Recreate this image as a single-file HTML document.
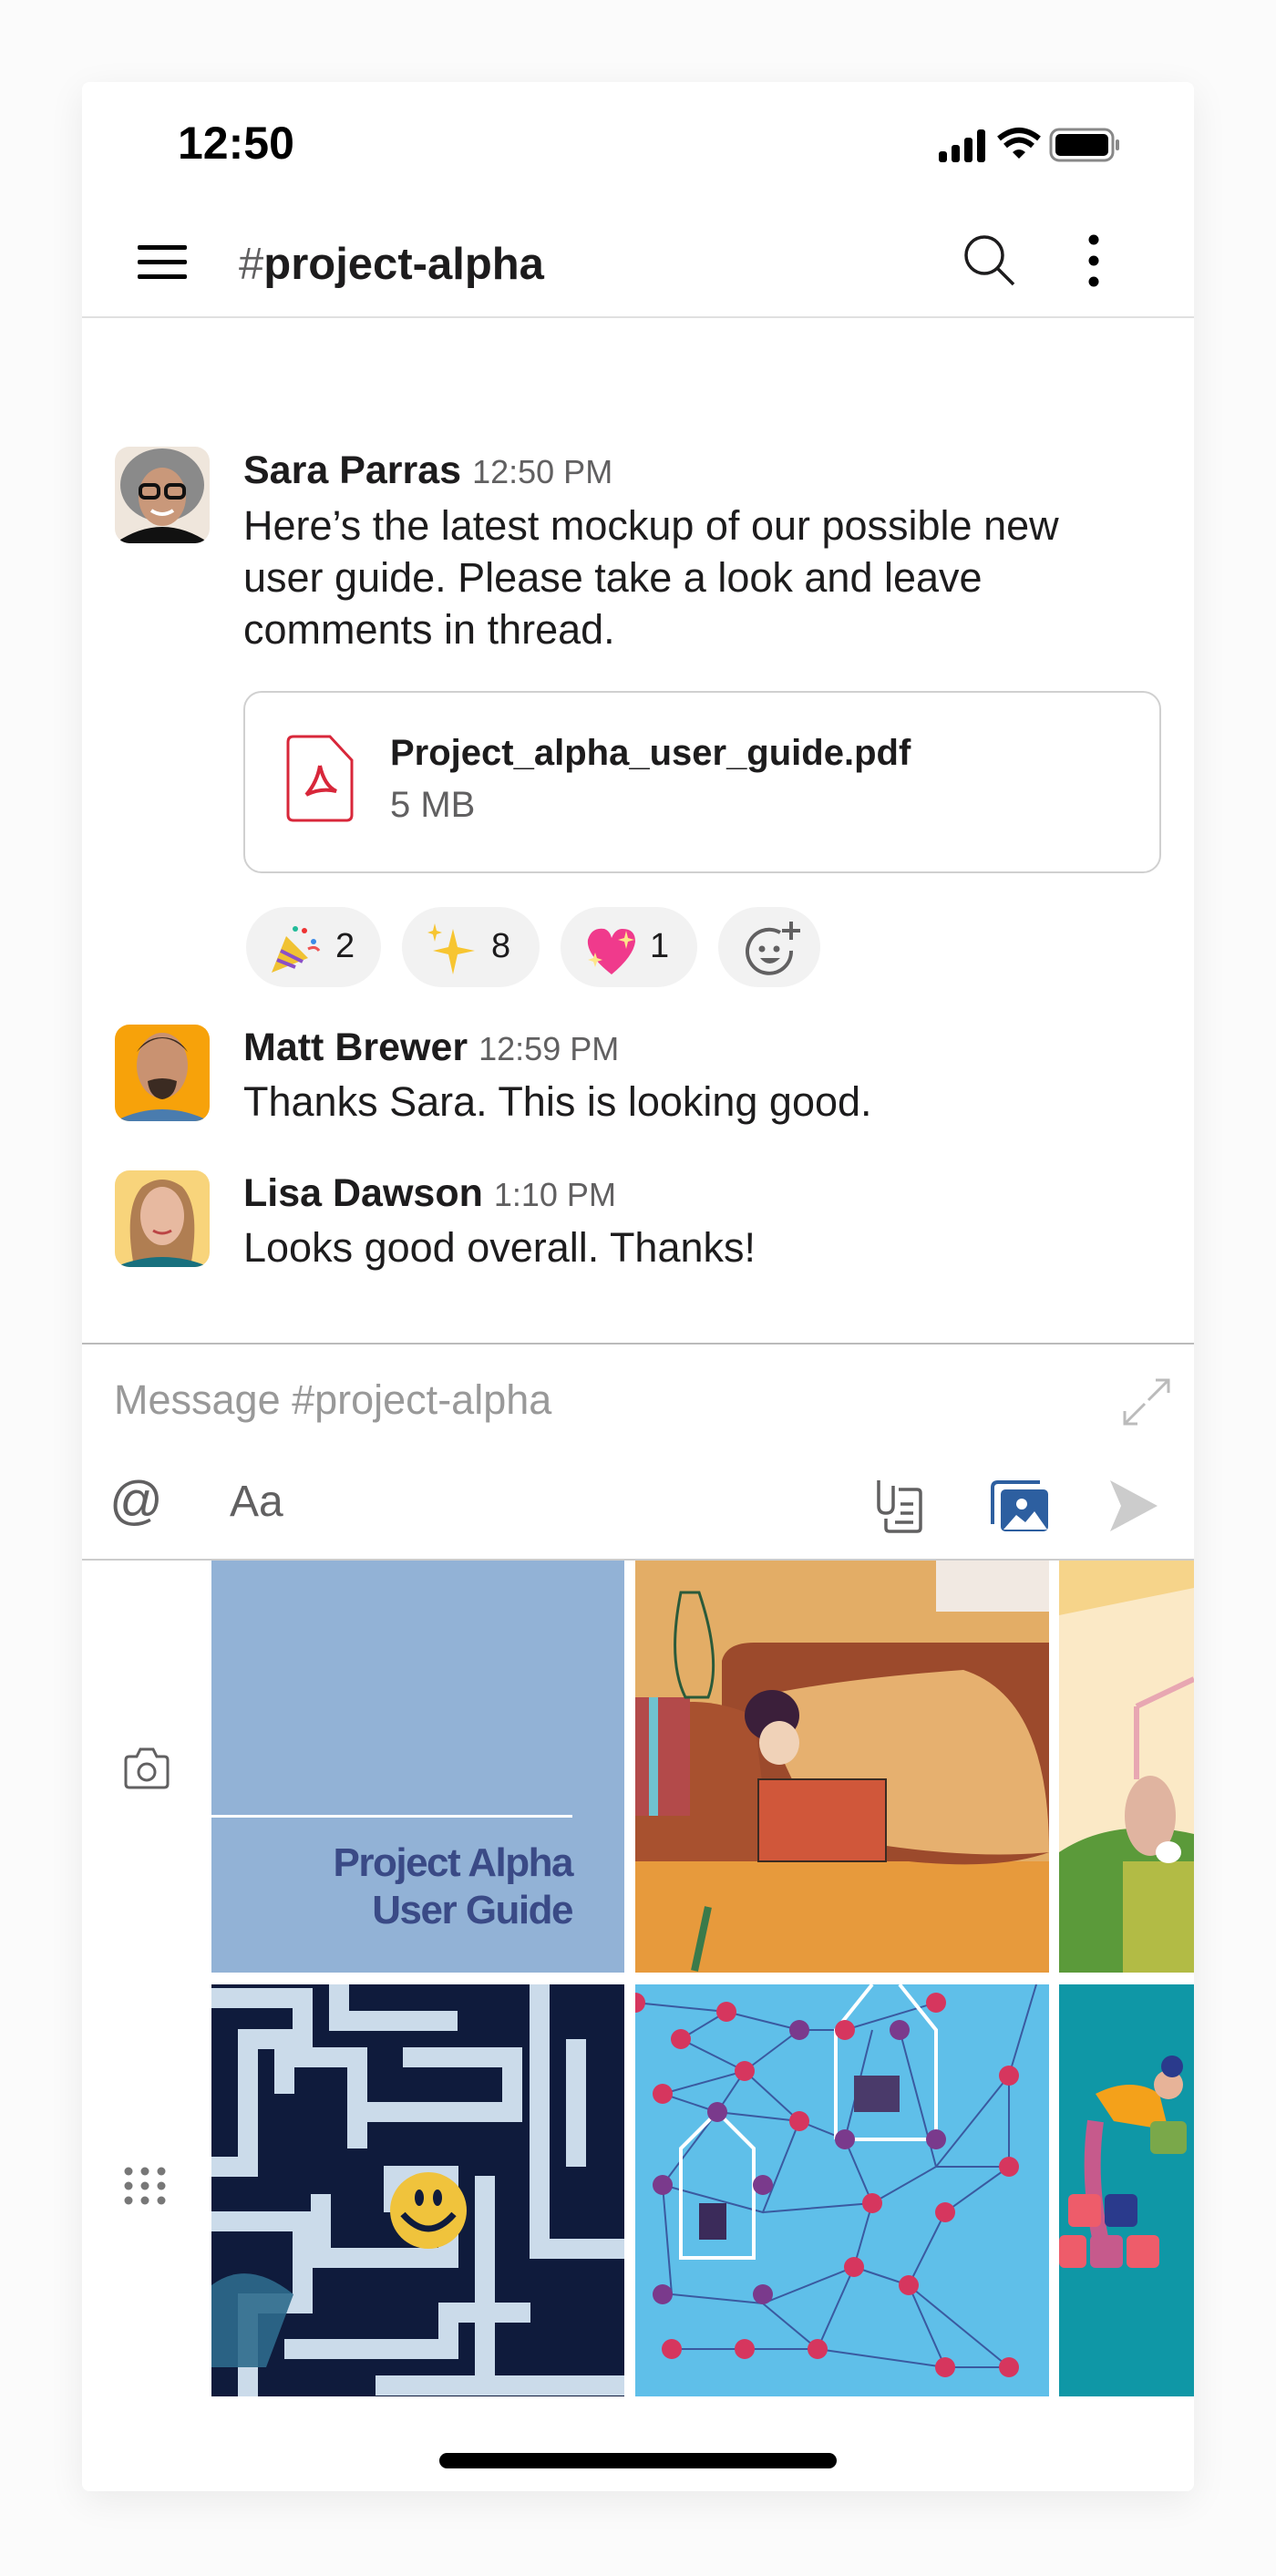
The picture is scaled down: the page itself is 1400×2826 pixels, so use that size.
<!DOCTYPE html>
<html><head><meta charset="utf-8"><style>
*{margin:0;padding:0;box-sizing:border-box}
body{width:1400px;height:2826px;background:#fbfbfb;position:relative;font-family:"Liberation Sans",sans-serif;overflow:hidden}
.phone{position:absolute;left:90px;top:90px;width:1220px;height:2643px;background:#fff;border-radius:8px;box-shadow:0 10px 40px rgba(0,0,0,0.07);overflow:hidden}
.a{position:absolute;white-space:nowrap}
.name{font-weight:bold;font-size:43px;color:#1d1c1d;line-height:normal}
.time{font-size:36px;color:#616061;margin-left:12px;font-weight:normal}
.msg{font-size:45px;color:#1d1c1d;line-height:57px}
.pill{position:absolute;top:905px;height:88px;background:#f2f2f2;border-radius:44px}
.pill span{position:absolute;left:98px;top:22px;font-size:38px;color:#1d1c1d}
.av{position:absolute;left:36px;width:104px;height:106px;border-radius:16px;overflow:hidden}
</style></head><body>
<div class="phone">
<div class="a" style="left:105px;top:38px;font-size:50px;font-weight:bold;color:#000">12:50</div>
<svg class="a" style="left:940px;top:48px" width="230" height="44" viewBox="0 0 230 44">
<rect x="0" y="28" width="9" height="12" rx="3"/><rect x="14" y="21" width="9" height="19" rx="3"/><rect x="28" y="13" width="9" height="27" rx="3"/><rect x="42" y="4" width="9" height="36" rx="3"/>
<path d="M66 14 Q88 -4 110 14" stroke="#000" stroke-width="6" fill="none"/><path d="M73 22 Q88 9 103 22" stroke="#000" stroke-width="6" fill="none"/><path d="M81 29 L88 36 L95 29 Q88 23 81 29Z"/>
<rect x="123" y="4" width="68" height="34" rx="9" fill="none" stroke="#888" stroke-width="3"/><rect x="128" y="9" width="58" height="24" rx="5"/><rect x="194" y="15" width="4" height="12" rx="2" fill="#888"/>
</svg>
<svg class="a" style="left:61px;top:179px" width="54" height="38"><rect y="0" width="54" height="5" rx="2"/><rect y="16" width="54" height="5" rx="2"/><rect y="32" width="54" height="5" rx="2"/></svg>
<div class="a" style="left:172px;top:172px;font-size:49px;font-weight:bold;color:#1d1c1d"><span style="color:#616061;font-weight:normal">#</span>project-alpha</div>
<svg class="a" style="left:966px;top:166px" width="60" height="60"><circle cx="24" cy="24" r="20" stroke="#1d1c1d" stroke-width="3.5" fill="none"/><path d="M38 38 L56 56" stroke="#1d1c1d" stroke-width="3.5"/></svg>
<svg class="a" style="left:1103px;top:166px" width="14" height="60"><circle cx="7" cy="7" r="5.5"/><circle cx="7" cy="30" r="5.5"/><circle cx="7" cy="53" r="5.5"/></svg>
<div class="a" style="left:0;top:257px;width:1220px;height:2px;background:#e0e0e0"></div>

<div class="av" style="top:400px;background:#efe6dc">
<svg width="104" height="106"><ellipse cx="52" cy="42" rx="46" ry="40" fill="#8a8a8a"/><ellipse cx="52" cy="55" rx="26" ry="32" fill="#c9987a"/><rect x="28" y="42" width="20" height="14" rx="5" fill="none" stroke="#111" stroke-width="4"/><rect x="56" y="42" width="20" height="14" rx="5" fill="none" stroke="#111" stroke-width="4"/><path d="M40 70 Q52 78 64 70" stroke="#fff" stroke-width="4" fill="none"/><path d="M0 106 Q52 70 104 106Z" fill="#111"/></svg></div>
<div class="a name" style="left:177px;top:402px">Sara Parras<span class="time">12:50 PM</span></div>
<div class="a msg" style="left:177px;top:458px">Here’s the latest mockup of our possible new<br>user guide. Please take a look and leave<br>comments in thread.</div>
<div class="a" style="left:177px;top:668px;width:1007px;height:200px;border:2px solid #d0d0d0;border-radius:20px"></div>
<svg class="a" style="left:224px;top:716px" width="74" height="96" viewBox="0 0 74 96"><path d="M8 2 H48 L72 28 V88 Q72 94 66 94 H8 Q2 94 2 88 V8 Q2 2 8 2Z" fill="none" stroke="#d8273a" stroke-width="3"/><path d="M37 34 Q34 52 22 66 M37 34 Q42 56 55 62 Q38 58 22 66" stroke="#d8273a" stroke-width="4" fill="none"/></svg>
<div class="a" style="left:338px;top:714px;font-size:40px;font-weight:bold;color:#1d1c1d">Project_alpha_user_guide.pdf</div>
<div class="a" style="left:338px;top:771px;font-size:40px;color:#616061">5 MB</div>

<div class="pill" style="left:180px;width:148px"><svg class="a" style="left:24px;top:18px" width="60" height="56"><path d="M4 54 L20 14 L44 38Z" fill="#f0c233"/><path d="M10 40 L30 48 M14 30 L38 42" stroke="#8a4fc8" stroke-width="4"/><circle cx="40" cy="8" r="3" fill="#e33"/><circle cx="50" cy="20" r="3" fill="#3a8be8"/><circle cx="30" cy="6" r="3" fill="#2b9"/><path d="M44 28 Q52 24 56 30" stroke="#e55" stroke-width="3" fill="none"/></svg><span>2</span></div>
<div class="pill" style="left:351px;width:151px"><svg class="a" style="left:26px;top:16px" width="60" height="60"><path d="M30 8 L35 28 L54 32 L35 36 L30 58 L25 36 L8 32 L25 28Z" fill="#f7c531"/><path d="M10 2 L12 10 L18 12 L12 14 L10 22 L8 14 L2 12 L8 10Z" fill="#f7c531"/></svg><span>8</span></div>
<div class="pill" style="left:525px;width:150px"><svg class="a" style="left:26px;top:20px" width="60" height="56"><path d="M30 54 Q2 32 4 16 Q8 2 22 4 Q28 6 30 14 Q34 4 42 4 Q56 4 56 18 Q54 34 30 54Z" fill="#f03a8c"/><path d="M46 6 L48 14 L55 16 L48 18 L46 26 L44 18 L37 16 L44 14Z" fill="#fde68a"/><path d="M12 30 L14 36 L20 38 L14 40 L12 46 L10 40 L4 38 L10 36Z" fill="#fde68a"/></svg><span>1</span></div>
<div class="pill" style="left:698px;width:112px"><svg class="a" style="left:28px;top:14px" width="64" height="64"><path d="M40 14 A24 24 0 1 0 52 34" stroke="#616061" stroke-width="4" fill="none"/><circle cx="20" cy="32" r="3.5" fill="#616061"/><circle cx="36" cy="32" r="3.5" fill="#616061"/><path d="M18 42 Q28 54 40 42Z" fill="#616061"/><path d="M52 2 V22 M42 12 H62" stroke="#616061" stroke-width="4"/></svg></div>

<div class="av" style="top:1034px;background:#f7a20a">
<svg width="104" height="106"><ellipse cx="52" cy="45" rx="28" ry="36" fill="#c99271"/><path d="M24 30 Q52 0 80 30 Q70 14 52 14 Q34 14 24 30Z" fill="#3b2b22"/><path d="M36 62 Q52 56 68 62 Q66 80 52 82 Q38 80 36 62Z" fill="#3b2b22"/><path d="M0 106 Q52 80 104 106Z" fill="#4a7cae"/></svg></div>
<div class="a name" style="left:177px;top:1035px">Matt Brewer<span class="time">12:59 PM</span></div>
<div class="a msg" style="left:177px;top:1090px">Thanks Sara. This is looking good.</div>

<div class="av" style="top:1194px;background:#f8d47b">
<svg width="104" height="106"><path d="M20 100 Q10 40 30 18 Q52 2 74 18 Q94 40 84 100Z" fill="#b07e52"/><ellipse cx="52" cy="50" rx="24" ry="32" fill="#e7b9a0"/><path d="M42 66 Q52 72 62 66" stroke="#b44" stroke-width="3" fill="none"/><path d="M0 106 Q52 84 104 106Z" fill="#18707e"/></svg></div>
<div class="a name" style="left:177px;top:1195px">Lisa Dawson<span class="time">1:10 PM</span></div>
<div class="a msg" style="left:177px;top:1250px">Looks good overall. Thanks!</div>

<div class="a" style="left:0;top:1383px;width:1220px;height:2px;background:#bbb"></div>
<div class="a" style="left:35px;top:1420px;font-size:45px;color:#999">Message #project-alpha</div>
<svg class="a" style="left:1140px;top:1420px" width="56" height="56"><path d="M30 26 L52 4 M38 4 H52 V18 M26 30 L4 52 M4 38 V52 H18" stroke="#bbb" stroke-width="3" fill="none"/></svg>
<div class="a" style="left:30px;top:1523px;font-size:58px;color:#616061">@</div>
<div class="a" style="left:162px;top:1530px;font-size:48px;color:#616061">Aa</div>
<svg class="a" style="left:866px;top:1532px" width="58" height="60"><path d="M8 2 V30 Q8 38 16 38 Q24 38 24 30 V8" stroke="#616061" stroke-width="3.5" fill="none"/><path d="M30 12 H50 Q54 12 54 16 V54 Q54 58 50 58 H20 Q16 58 16 54 V44" stroke="#616061" stroke-width="3.5" fill="none"/><path d="M32 28 H46 M32 38 H46 M26 48 H46" stroke="#616061" stroke-width="3.5"/></svg>
<svg class="a" style="left:995px;top:1532px" width="68" height="60"><path d="M4 50 V10 Q4 4 10 4 H56" stroke="#2d5fa0" stroke-width="4" fill="none"/><rect x="13" y="12" width="52" height="46" rx="5" fill="#2d5fa0"/><circle cx="36" cy="28" r="6" fill="#fff"/><path d="M16 56 L30 40 L40 48 L50 36 L64 56Z" fill="#fff"/></svg>
<svg class="a" style="left:1126px;top:1532px" width="56" height="60"><path d="M2 2 L54 30 L2 58 L14 30Z" fill="#ccc"/></svg>
<div class="a" style="left:0;top:1620px;width:1220px;height:2px;background:#ccc"></div>

<svg class="a" style="left:44px;top:1827px" width="54" height="46"><path d="M4 14 Q4 10 8 10 H16 L20 2 H34 L38 10 H46 Q50 10 50 14 V40 Q50 44 46 44 H8 Q4 44 4 40Z" stroke="#616061" stroke-width="3" fill="none"/><circle cx="27" cy="27" r="9" stroke="#616061" stroke-width="3" fill="none"/></svg>
<svg class="a" style="left:46px;top:2287px" width="48" height="42"><g fill="#777"><circle cx="5" cy="5" r="4.5"/><circle cx="23" cy="5" r="4.5"/><circle cx="41" cy="5" r="4.5"/><circle cx="5" cy="21" r="4.5"/><circle cx="23" cy="21" r="4.5"/><circle cx="41" cy="21" r="4.5"/><circle cx="5" cy="37" r="4.5"/><circle cx="23" cy="37" r="4.5"/><circle cx="41" cy="37" r="4.5"/></g></svg>

<div class="a" style="left:142px;top:1622px;width:453px;height:452px;background:#92b2d6">
<div class="a" style="left:0;top:279px;width:396px;height:3px;background:#fff"></div>
<div class="a" style="right:57px;top:306px;font-size:44px;font-weight:bold;color:#3a4a86;text-align:right;line-height:52px;letter-spacing:-1.5px">Project Alpha<br>User Guide</div></div>
<svg class="a" style="left:607px;top:1622px" width="454" height="452" viewBox="0 0 454 452">
<rect width="454" height="452" fill="#e3ad66"/><rect x="330" y="0" width="124" height="56" fill="#f1e9e2"/>
<rect x="0" y="330" width="454" height="122" fill="#e79a3c"/>
<path d="M95 110 Q100 90 130 90 H454 V320 Q400 340 300 330 H95Z" fill="#9c4a2c"/>
<path d="M0 170 Q60 140 130 170 L150 330 H0Z" fill="#a8512f"/>
<path d="M130 150 Q220 130 360 120 Q454 150 454 320 Q350 330 200 300Z" fill="#e6b06f"/>
<ellipse cx="150" cy="170" rx="30" ry="28" fill="#3b1f3a"/><ellipse cx="158" cy="200" rx="22" ry="24" fill="#f0d2b8"/>
<rect x="135" y="240" width="140" height="90" fill="#d0573a" stroke="#3b2b22" stroke-width="2"/>
<rect x="0" y="150" width="60" height="130" fill="#b34a4a"/><rect x="15" y="150" width="10" height="130" fill="#6fc2cf"/>
<path d="M50 35 Q35 110 55 150 H80 Q95 110 70 35Z" fill="none" stroke="#2a5a3a" stroke-width="3"/>
<path d="M80 380 L65 450" stroke="#3a7a4a" stroke-width="8"/></svg>
<svg class="a" style="left:1072px;top:1622px" width="148" height="452" viewBox="0 0 148 452">
<rect width="148" height="452" fill="#fbe9c6"/><path d="M0 0 H148 V30 L0 60Z" fill="#f6d48a"/>
<path d="M0 320 Q60 280 148 300 V452 H0Z" fill="#5b9a3a"/><rect x="70" y="330" width="78" height="122" fill="#b2bb45"/>
<path d="M85 160 L148 130 M85 160 V240" stroke="#e8a7b2" stroke-width="6" fill="none"/>
<ellipse cx="100" cy="280" rx="28" ry="44" fill="#e0b4a0"/><ellipse cx="120" cy="320" rx="14" ry="12" fill="#fff"/></svg>
<svg class="a" style="left:142px;top:2087px" width="453" height="452" viewBox="0 0 453 452">
<rect width="453" height="452" fill="#0f1b3c"/>
<g stroke="#cbdbea" stroke-width="22" fill="none">
<path d="M0 15 H100 V60 H40 V200 H0"/><path d="M140 0 V40 H270"/><path d="M80 120 V80 H160 V180"/><path d="M210 80 H330 V140 H160"/><path d="M0 260 H100 V350 H40 V452"/><path d="M120 230 V300 H260 V210 H200 V250"/><path d="M300 210 V450"/><path d="M360 0 V290 H453"/><path d="M80 400 H260 V360 H350"/><path d="M180 440 H453"/><path d="M400 60 V200"/></g>
<path d="M0 330 Q40 300 90 340 L60 420 H0Z" fill="#2e6a8c" opacity=".9"/>
<circle cx="238" cy="248" r="42" fill="#f0c33c"/><ellipse cx="228" cy="234" rx="5" ry="9" fill="#0f1b3c"/><ellipse cx="248" cy="234" rx="5" ry="9" fill="#0f1b3c"/><path d="M210 252 Q238 284 266 252" stroke="#0f1b3c" stroke-width="7" fill="none"/></svg>
<svg class="a" style="left:607px;top:2087px" width="454" height="452" viewBox="0 0 454 452">
<rect width="454" height="452" fill="#5fbfe9"/>
<g stroke="#3a5aa0" stroke-width="2" fill="none"><path d="M0 20 L100 30 L180 50 L230 50 L330 20 M50 60 L100 30 M50 60 L120 95 L180 50 M30 120 L120 95 L90 140 L30 120 M90 140 L180 150 L230 170 L260 50 M180 150 L120 95 M30 220 L90 140 M30 220 L140 250 L180 150 M140 250 L260 240 L330 200 L410 100 L410 200 L330 200 L290 50 M260 240 L230 170 M30 220 L40 340 L140 350 L240 310 L260 240 M240 310 L300 330 L340 250 L410 200 M300 330 L410 420 L340 420 L300 330 M140 350 L200 400 L240 310 M40 400 L120 400 L200 400 L340 420 M410 100 L440 0"/></g>
<g stroke="#fff" stroke-width="4" fill="none"><path d="M50 300 V180 L90 140 L130 180 V300Z"/><path d="M220 170 V50 L260 0 M220 50 L260 0 M330 170 V50 L290 0"/><path d="M220 170 H330"/></g>
<g fill="#d6365e"><circle cx="0" cy="20" r="11"/><circle cx="100" cy="30" r="11"/><circle cx="50" cy="60" r="11"/><circle cx="120" cy="95" r="11"/><circle cx="30" cy="120" r="11"/><circle cx="180" cy="150" r="11"/><circle cx="330" cy="20" r="11"/><circle cx="410" cy="100" r="11"/><circle cx="410" cy="200" r="11"/><circle cx="260" cy="240" r="11"/><circle cx="340" cy="250" r="11"/><circle cx="240" cy="310" r="11"/><circle cx="300" cy="330" r="11"/><circle cx="40" cy="400" r="11"/><circle cx="120" cy="400" r="11"/><circle cx="200" cy="400" r="11"/><circle cx="340" cy="420" r="11"/><circle cx="410" cy="420" r="11"/><circle cx="230" cy="50" r="11"/></g>
<g fill="#7a3a8c"><circle cx="180" cy="50" r="11"/><circle cx="90" cy="140" r="11"/><circle cx="230" cy="170" r="11"/><circle cx="330" cy="170" r="11"/><circle cx="30" cy="220" r="11"/><circle cx="140" cy="220" r="11"/><circle cx="30" cy="340" r="11"/><circle cx="140" cy="340" r="11"/><circle cx="290" cy="50" r="11"/></g>
<rect x="240" y="100" width="50" height="40" fill="#4a3a6a"/><rect x="70" y="240" width="30" height="40" fill="#3b2b5a"/></svg>
<svg class="a" style="left:1072px;top:2087px" width="148" height="452" viewBox="0 0 148 452">
<rect width="148" height="452" fill="#0f97a6"/>
<path d="M40 120 Q80 100 110 120 L120 160 L60 150Z" fill="#f4a11a"/><circle cx="120" cy="110" r="16" fill="#e7b398"/><circle cx="124" cy="90" r="12" fill="#2a3a8c"/>
<path d="M40 150 Q30 220 50 300" stroke="#c65a8c" stroke-width="18" fill="none"/>
<rect x="100" y="150" width="40" height="36" rx="6" fill="#7aa84a"/>
<rect x="10" y="230" width="36" height="36" rx="6" fill="#ee5c6a"/><rect x="50" y="230" width="36" height="36" rx="6" fill="#2a3a8c"/><rect x="0" y="275" width="30" height="36" rx="6" fill="#ee5c6a"/><rect x="34" y="275" width="36" height="36" rx="6" fill="#c65a8c"/><rect x="74" y="275" width="36" height="36" rx="6" fill="#ee5c6a"/></svg>

<div class="a" style="left:392px;top:2601px;width:436px;height:17px;border-radius:9px;background:#000"></div>
</div>
</body></html>
